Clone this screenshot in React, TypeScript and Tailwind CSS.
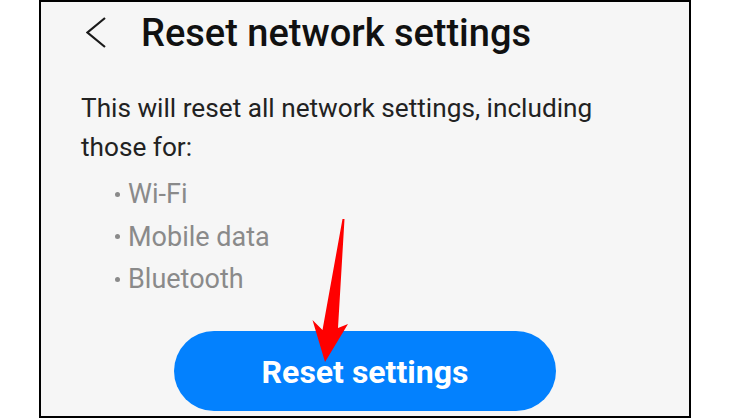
export default function App() {
  return (
    <div className="relative w-[730px] h-[418px] bg-white font-['Roboto',sans-serif]">
      <div className="ml-[39px] w-[652px] h-[418px] border-2 border-black bg-[#f6f6f6] pl-[40px] pt-[13px] flex flex-col">
        {/* header */}
        <div className="flex items-center h-[36px]">
          <svg width="22" height="34" viewBox="0 0 22 34" className="ml-[5px]">
            <polyline
              points="19,2 1.5,16.5 19,31"
              fill="none"
              stroke="#1a1a1a"
              strokeWidth="2.2"
              strokeLinejoin="miter"
            />
          </svg>
          <h1 className="ml-[33px] text-[38px] leading-[36px] font-medium text-[#111111]">
            Reset network settings
          </h1>
        </div>

        <p className="mt-[38px] text-[26.2px] leading-[39px] text-[#222222] w-[540px]">
          This will reset all network settings, including those for:
        </p>

        <ul className="mt-[6px] text-[27px] leading-[42.5px] text-[#8a8a8a]">
          {['Wi-Fi', 'Mobile data', 'Bluetooth'].map((item) => (
            <li key={item} className="flex items-center">
              <span className="ml-[34px] w-[5px] h-[5px] rounded-full bg-[#8a8a8a]" />
              <span className="ml-[8px]">{item}</span>
            </li>
          ))}
        </ul>

        <div className="mt-[30px] ml-[93px] w-[382px] h-[80px] rounded-full bg-[#0381fe] flex items-center justify-center">
          <span className="mt-[3px] text-white text-[32px] font-bold">Reset settings</span>
        </div>
      </div>

      {/* annotation arrow */}
      <svg
        className="absolute left-0 top-0 pointer-events-none"
        width="730"
        height="418"
        viewBox="0 0 730 418"
      >
        <polygon
          points="342.5,219 344.5,219 338,328 348,324 325,362 312.5,320 322.5,330"
          fill="#ff0000"
        />
      </svg>
    </div>
  );
}
